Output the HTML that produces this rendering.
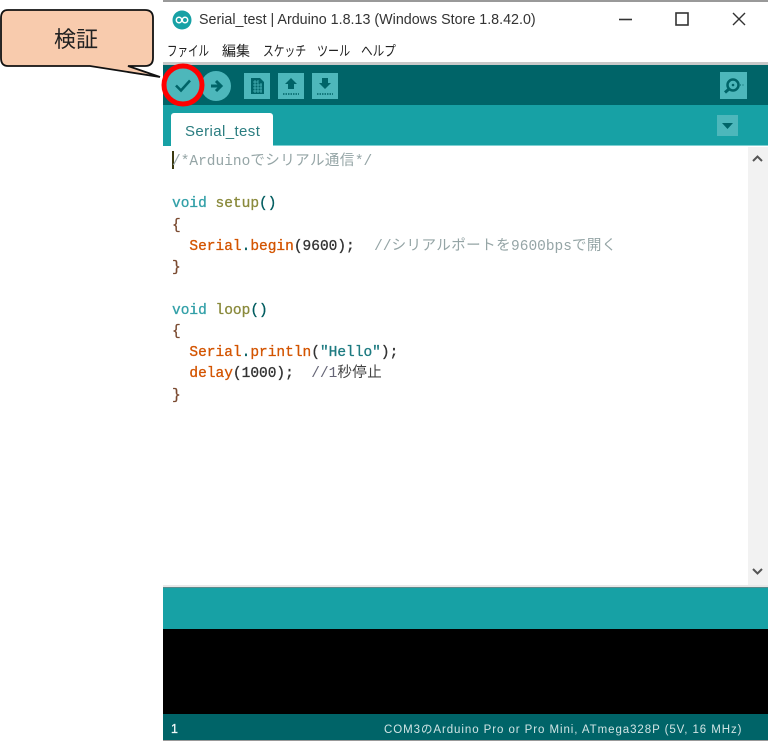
<!DOCTYPE html>
<html lang="ja"><head><meta charset="utf-8"><style>
html,body{margin:0;padding:0;background:#fff}
#p{position:relative;width:768px;height:742px;overflow:hidden;background:#fff;font-family:"Liberation Sans","Noto Sans CJK JP",sans-serif;filter:blur(.3px)}
.a{position:absolute}
.t{position:absolute;white-space:pre;line-height:20px}
.m{transform-origin:0 50%;font-size:14px;color:#222;top:41px}
.c{position:absolute;left:172px;white-space:pre;font:14.5px/20px "Liberation Mono","Noto Sans CJK JP",monospace;color:#333;-webkit-text-stroke:.3px}
.k{color:#33a0a8}.f{color:#8a8a3c}.o{color:#d35400}.g{color:#95a5a6;-webkit-text-stroke:0}.s{color:#005c5f}.j{letter-spacing:.45px}
</style></head><body><div id="p">
<div class="a" style="left:163px;top:0;width:605px;height:2px;background:#999"></div>
<svg class="a" style="left:172px;top:10px" width="20" height="20" viewBox="0 0 20 20"><circle cx="10" cy="10" r="9.500" fill="#17a1a5"/><circle cx="7" cy="10" r="2.700" fill="none" stroke="#fff" stroke-width="1.500"/><circle cx="13" cy="10" r="2.700" fill="none" stroke="#fff" stroke-width="1.500"/></svg>
<div class="t" style="left:199px;top:10px;font-size:14.300px;color:#333">Serial_test | Arduino 1.8.13 (Windows Store 1.8.42.0)</div>
<svg class="a" style="left:610px;top:5px" width="150" height="30" viewBox="0 0 150 30" fill="none" stroke="#333"><path d="M9 14.500H22" stroke-width="1.600"/><rect x="66" y="8" width="12" height="12" stroke-width="1.600"/><path d="M123 8L135 20M135 8L123 20" stroke-width="1.400"/></svg>
<div class="t m" style="left:167px;transform:scaleX(.75)">ファイル</div>
<div class="t m" style="left:222px">編集</div>
<div class="t m" style="left:263px;transform:scaleX(.77)">スケッチ</div>
<div class="t m" style="left:317px;transform:scaleX(.79)">ツール</div>
<div class="t m" style="left:361px;transform:scaleX(.83)">ヘルプ</div>
<div class="a" style="left:163px;top:62px;width:605px;height:3px;background:#c8c8c8"></div>
<div class="a" style="left:163px;top:65px;width:605px;height:40px;background:#006468"></div>
<div class="a" style="left:163px;top:105px;width:605px;height:41px;background:#17a1a5"></div>
<svg class="a" style="left:163px;top:65px" width="200" height="40" viewBox="0 0 200 40">
<circle cx="53" cy="21" r="15" fill="#4db7bb"/><path d="M48 21H57M53 16L58 21L53 26" fill="none" stroke="#006468" stroke-width="3"/>
<rect x="81" y="8" width="26" height="26" fill="#4db7bb"/><path d="M88 13H97L101 17V29H88Z" fill="#006468"/><path d="M90 17H95M90 20H99M90 23H99M90 26H99M92 15V28M95 15V28M98 18V28" stroke="#4db7bb" stroke-width=".8"/>
<rect x="115" y="8" width="26" height="26" fill="#4db7bb"/><path d="M128 13L134 19H131V24H125V19H122Z" fill="#006468"/><path d="M120 29H136" stroke="#006468" stroke-width="1.500" stroke-dasharray="1.500 1"/>
<rect x="149" y="8" width="26" height="26" fill="#4db7bb"/><path d="M162 24L168 18H165V13H159V18H156Z" fill="#006468"/><path d="M154 29H170" stroke="#006468" stroke-width="1.500" stroke-dasharray="1.500 1"/>
</svg>
<svg class="a" style="left:720px;top:72px" width="27" height="27" viewBox="0 0 27 27"><rect width="27" height="27" fill="#4db7bb"/><circle cx="13" cy="13" r="5.500" fill="none" stroke="#006468" stroke-width="2.500"/><circle cx="13" cy="13" r="1.300" fill="#006468"/><path d="M9 17L5 20.500" stroke="#006468" stroke-width="3"/><path d="M20 13H25" stroke="#006468" stroke-width="1" stroke-dasharray="1 1.500"/></svg>
<div class="a" style="left:171px;top:113px;width:102px;height:33px;background:#fff;border-radius:3px 3px 0 0"></div>
<div class="t" style="left:185px;top:122px;font-size:15px;letter-spacing:.4px;color:#2b7d80">Serial_test</div>
<svg class="a" style="left:717px;top:115px" width="21" height="21" viewBox="0 0 21 21"><rect width="21" height="21" fill="#4db7bb"/><path d="M5 8H16L10.500 14Z" fill="#006468"/></svg>
<div class="a" style="left:273px;top:145px;width:495px;height:1px;background:#7fd0d2"></div>
<div class="a" style="left:748px;top:147px;width:20px;height:438px;background:#f2f2f2"></div>
<svg class="a" style="left:748px;top:147px" width="20" height="438" viewBox="0 0 20 438" fill="none" stroke="#555" stroke-width="2"><path d="M5 14L9.500 9.500L14 14"/><path d="M5 422L9.500 426.500L14 422"/></svg>
<div class="a" style="left:172px;top:151px;width:2px;height:18px;background:#3c3a10"></div>
<div class="c g" style="top:152px">/*Arduino<span class="j">でシリアル通信</span>*/</div>
<div class="c" style="top:194px"><span class="k">void</span> <span class="f">setup</span><span class="s">()</span></div>
<div class="c" style="top:216px"><span style="color:#7a4a30">{</span></div>
<div class="c" style="top:237px">  <span class="o">Serial</span><span class="s">.</span><span class="o">begin</span>(9600);  <span class="g" style="margin-left:2px">//<span class="j">シリアルポートを</span>9600bps<span class="j">で開く</span></span></div>
<div class="c" style="top:258px"><span style="color:#7a4a30">}</span></div>
<div class="c" style="top:301px"><span class="k">void</span> <span class="f">loop</span><span class="s">()</span></div>
<div class="c" style="top:322px"><span style="color:#7a4a30">{</span></div>
<div class="c" style="top:343px">  <span class="o">Serial</span><span class="s">.</span><span class="o">println</span>(<span style="color:#1d7a80">"Hello"</span>);</div>
<div class="c" style="top:364px">  <span class="o">delay</span>(1000);  <span class="g" style="color:#667">//1</span><span class="j" style="color:#444;-webkit-text-stroke:0">秒停止</span></div>
<div class="c" style="top:386px"><span style="color:#7a4a30">}</span></div>
<div class="a" style="left:163px;top:585px;width:605px;height:3px;background:#e8e8e8"></div>
<div class="a" style="left:163px;top:587px;width:605px;height:1px;background:#5a8a8c"></div>
<div class="a" style="left:163px;top:588px;width:605px;height:41px;background:#17a1a5"></div>
<div class="a" style="left:163px;top:629px;width:605px;height:85px;background:#000"></div>
<div class="a" style="left:163px;top:714px;width:605px;height:26px;background:#006468"></div>
<div class="a" style="left:163px;top:740px;width:605px;height:1px;background:#999"></div>
<div class="t" style="left:171px;top:719px;font-size:12.500px;color:#f0f8f8;-webkit-text-stroke:.3px">1</div>
<div class="t" style="left:384px;top:720px;font-size:11.500px;letter-spacing:.93px;color:#d0e4e4">COM3のArduino Pro or Pro Mini, ATmega328P (5V, 16 MHz)</div>
<svg class="a" style="left:0;top:9px" width="210" height="100" viewBox="0 0 210 100"><path d="M8 1H145Q153 1 153 9V49Q153 57 145 57H128L160 68L90 57H8Q1 57 1 49V9Q1 1 8 1Z" fill="#f8cbad" stroke="#111" stroke-width="1.800"/></svg>
<div class="t" style="left:54px;top:28px;font-size:22px;line-height:24px;color:#222">検証</div>
<svg class="a" style="left:158px;top:62px" width="50" height="50" viewBox="0 0 50 50"><circle cx="25" cy="23" r="19" fill="#4db7bb" stroke="#f00" stroke-width="5"/><path d="M18 23.500L23 28.500L32 18.500" fill="none" stroke="#006468" stroke-width="2.600"/></svg>
</div></body></html>
